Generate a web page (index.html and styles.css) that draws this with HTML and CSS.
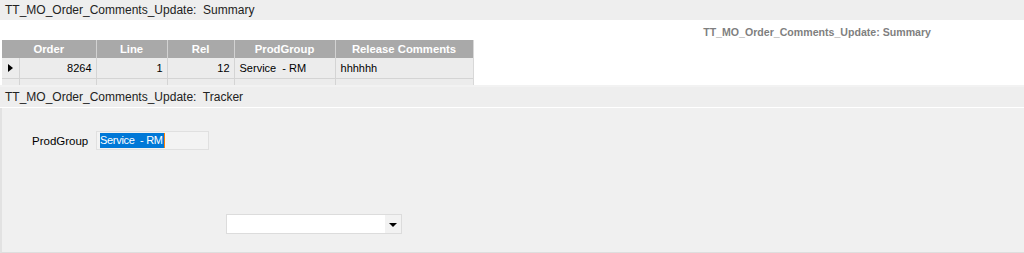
FILE: index.html
```html
<!DOCTYPE html>
<html>
<head>
<meta charset="utf-8">
<link rel="stylesheet" href="styles.css">
</head>
<body>
<div class="page">
  <div class="sec-head">TT_MO_Order_Comments_Update:&nbsp; Summary</div>
  <div class="summary">
    <div class="report-title">TT_MO_Order_Comments_Update: Summary</div>
    <div class="grid-wrap">
      <table class="grid">
        <colgroup>
          <col class="c-rh"><col class="c-order"><col class="c-line"><col class="c-rel"><col class="c-pg"><col class="c-rc">
        </colgroup>
        <thead>
          <tr><th colspan="2">Order</th><th>Line</th><th>Rel</th><th>ProdGroup</th><th>Release Comments</th></tr>
        </thead>
        <tbody>
          <tr class="row">
            <td class="rh"><span class="arrow"></span></td>
            <td class="num">8264</td><td class="num">1</td><td class="num">12</td><td>Service&nbsp; - RM</td><td>hhhhhh</td>
          </tr>
          <tr class="row">
            <td class="rh"></td><td></td><td></td><td></td><td></td><td></td>
          </tr>
        </tbody>
      </table>
    </div>
  </div>
  <div class="gap"></div>
  <div class="sec-head tracker-head">TT_MO_Order_Comments_Update:&nbsp; Tracker</div>
  <div class="panel">
    <div class="field">
      <span class="label">ProdGroup</span>
      <span class="input"><span class="sel">Service&nbsp; - RM</span></span>
    </div>
    <div class="combo">
      <span class="combo-text"></span>
      <span class="combo-btn"><span class="tri"></span></span>
    </div>
  </div>
</div>
</body>
</html>
```
FILE: styles.css
```css
html, body {
  margin: 0;
  padding: 0;
  background: #ffffff;
}
.page {
  width: 1024px;
  height: 253px;
  overflow: hidden;
  font-family: "Liberation Sans", Arial, sans-serif;
  display: flex;
  flex-direction: column;
}
.sec-head {
  height: 20px;
  line-height: 21px;
  background: #eeeeee;
  padding-left: 5px;
  font-size: 12px;
  color: #222222;
  white-space: pre;
}
.summary {
  height: 65px;
  background: #ffffff;
  position: relative;
}
.report-title {
  position: absolute;
  right: 93px;
  top: 6px;
  font-size: 10.6px;
  font-weight: bold;
  color: #7f7f7f;
}
.grid-wrap {
  margin-top: 20px;
  margin-left: 2px;
  width: 472px;
  height: 45px;
  overflow: hidden;
  border-right: 1px solid #d8d8d8;
  box-sizing: border-box;
}
.grid {
  border-collapse: collapse;
  table-layout: fixed;
  width: 471px;
  font-size: 11px;
}
.c-rh { width: 17px; }
.c-order { width: 77px; }
.c-line { width: 71px; }
.c-rel { width: 67px; }
.c-pg { width: 101px; }
.c-rc { width: 138px; }
.grid th {
  height: 18px;
  padding: 0;
  background: #a9a9a9;
  color: #ffffff;
  font-weight: bold;
  font-size: 11.3px;
  text-align: center;
  border-right: 1px solid #d2d2d2;
  box-sizing: border-box;
}
.grid td {
  height: 20px;
  padding: 0 4px 0 5px;
  background: #ececec;
  color: #000000;
  border-right: 1px solid #d4d4d4;
  border-bottom: 1px solid #d4d4d4;
  box-sizing: border-box;
  white-space: nowrap;
  overflow: hidden;
}
.grid td.num { text-align: right; }
.grid td.rh { padding: 0; }
.arrow {
  display: block;
  width: 0;
  height: 0;
  margin-left: 6px;
  border-top: 4px solid transparent;
  border-bottom: 4px solid transparent;
  border-left: 5px solid #000000;
}
.gap {
  height: 2px;
  background: #f2f2f2;
}
.tracker-head {
  border-bottom: 1px solid #ffffff;
}
.panel {
  flex: 1;
  background: #f0f0f0;
  border-left: 2px solid #e2e2e2;
  border-bottom: 1px solid #dedede;
  padding-top: 23px;
  padding-left: 30px;
}
.field {
  display: flex;
  align-items: center;
  height: 19px;
}
.label {
  width: 64px;
  font-size: 11.5px;
  color: #000000;
}
.input {
  width: 113px;
  height: 19px;
  box-sizing: border-box;
  background: #f3f3f3;
  border: 1px solid #e0e0e0;
  padding: 1px 3px;
  display: flex;
  align-items: stretch;
}
.sel {
  background: #0078d7;
  color: #ffffff;
  font-size: 11px;
  letter-spacing: -0.3px;
  line-height: 15px;
  padding-right: 1px;
  border-right: 1px solid #ff7f00;
}
.combo {
  margin-top: 64px;
  margin-left: 194px;
  width: 176px;
  height: 20px;
  box-sizing: border-box;
  border: 1px solid #dcdcdc;
  background: #ffffff;
  display: flex;
}
.combo-text { flex: 1; }
.combo-btn {
  width: 16px;
  background: #f2f2f2;
  display: flex;
  align-items: center;
  justify-content: center;
}
.tri {
  width: 0;
  height: 0;
  border-left: 4px solid transparent;
  border-right: 4px solid transparent;
  border-top: 4px solid #000000;
  margin-top: 1px;
}
```
